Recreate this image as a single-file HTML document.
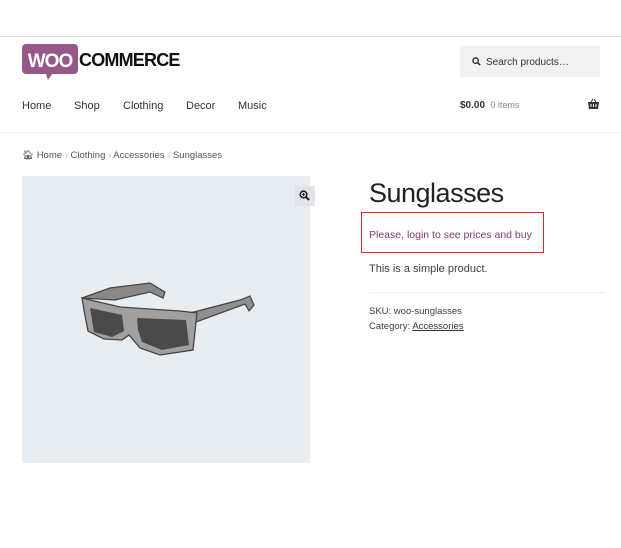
<!DOCTYPE html>
<html><head><meta charset="utf-8"><style>
*{margin:0;padding:0;box-sizing:border-box}
body{width:621px;height:548px;background:#fff;font-family:"Liberation Sans",sans-serif;color:#404040;position:relative;overflow:hidden}
.a{position:absolute;white-space:nowrap}
.nav{font-size:11px;color:#333;top:100px}
</style></head><body>
<div class="a" style="top:36px;left:0;width:621px;height:1px;background:#ddd"></div>
<div class="a" style="top:132px;left:0;width:621px;height:1px;background:#eee"></div>
<svg class="a" style="left:22px;top:44px" width="56" height="36" viewBox="0 0 56 36"><path d="M4 0H52a4 4 0 0 1 4 4V26a4 4 0 0 1-4 4H30L26 36 24 30H4a4 4 0 0 1-4-4V4a4 4 0 0 1 4-4z" fill="#96588a"/><text x="28" y="23" font-family="Liberation Sans" font-weight="bold" font-size="19" fill="#fff" text-anchor="middle" letter-spacing="-1">WOO</text></svg>
<div class="a" style="left:79px;top:50px;font-size:18px;font-weight:bold;color:#111;letter-spacing:-0.8px">COMMERCE</div>
<div class="a" style="left:460px;top:46px;width:140px;height:31px;background:#f2f2f2"></div>
<svg class="a" style="left:472px;top:57px" width="9" height="9" viewBox="0 0 10 10"><circle cx="4" cy="4" r="3" fill="none" stroke="#333" stroke-width="1.6"/><path d="M6 6L9 9" stroke="#333" stroke-width="1.8"/></svg>
<div class="a" style="left:486px;top:57px;font-size:10px;color:#333">Search products…</div>
<div class="a nav" style="left:22px">Home</div>
<div class="a nav" style="left:74px">Shop</div>
<div class="a nav" style="left:123px">Clothing</div>
<div class="a nav" style="left:186px">Decor</div>
<div class="a nav" style="left:238px">Music</div>
<div class="a" style="left:460px;top:100px;font-size:10px;font-weight:bold;color:#333">$0.00 <span style="font-weight:normal;color:#888;font-size:9px">&nbsp;0 items</span></div>
<svg class="a" style="left:587px;top:99px" width="13" height="11" viewBox="0 0 13 11"><path d="M1 3H12L11 10H2z" fill="#333"/><path d="M4 3L6 0M9 3L7 0" stroke="#333"/><path d="M4 5V8M6.5 5V8M9 5V8" stroke="#fff"/></svg>
<div class="a" style="left:22px;top:150px;font-size:9.5px;color:#555">🏠︎ Home <span style="color:#bbb">›</span> Clothing <span style="color:#bbb">›</span> Accessories <span style="color:#bbb">›</span> Sunglasses</div>
<div class="a" style="left:22px;top:176px;width:288px;height:287px;background:#e8edf2"></div>
<div class="a" style="left:295px;top:186px;width:20px;height:20px;background:#e0e4e8"></div>
<svg class="a" style="left:299px;top:190px" width="11" height="11" viewBox="0 0 11 11"><circle cx="4.5" cy="4.5" r="3.3" fill="none" stroke="#222" stroke-width="1.6"/><path d="M7 7L10 10" stroke="#222" stroke-width="2"/><path d="M3 4.5H6M4.5 3V6" stroke="#222"/></svg>
<svg class="a" style="left:0;top:0" width="320" height="400" viewBox="0 0 320 400">
<path d="M82 298L110 288L150 283L165 292L163 298L150 292L115 300Z" fill="#888" stroke="#444" stroke-width="1.2"/>
<path d="M190 313L240 300L250 296L254 305L249 311L245 304L196 322Z" fill="#909090" stroke="#444" stroke-width="1.2"/>
<path d="M82 298L120 307L180 311L197 313L193 350L160 355L140 348L129 335L122 340L104 339L88 331L84 310Z" fill="#a0a0a0" stroke="#444" stroke-width="1.3"/>
<path d="M90 308L122 315L124 331L112 337L94 332Z" fill="#4a4a4a"/>
<path d="M137 318L186 320L189 345L162 350L142 342L138 330Z" fill="#4a4a4a"/>
</svg>
<div class="a" style="left:369px;top:178px;font-size:27px;color:#222;letter-spacing:-0.5px">Sunglasses</div>
<div class="a" style="left:361px;top:212px;width:183px;height:41px;border:1.5px solid #e22"></div>
<div class="a" style="left:369px;top:229px;font-size:10.5px;color:#7e3a74">Please, login to see prices and buy</div>
<div class="a" style="left:369px;top:263px;font-size:11px;color:#404040">This is a simple product.</div>
<div class="a" style="left:369px;top:292px;width:236px;height:1px;background:#eee"></div>
<div class="a" style="left:369px;top:306px;font-size:9.5px;color:#404040">SKU: woo-sunglasses</div>
<div class="a" style="left:369px;top:321px;font-size:9.5px;color:#404040">Category: <span style="text-decoration:underline;color:#333">Accessories</span></div>
</body></html>
